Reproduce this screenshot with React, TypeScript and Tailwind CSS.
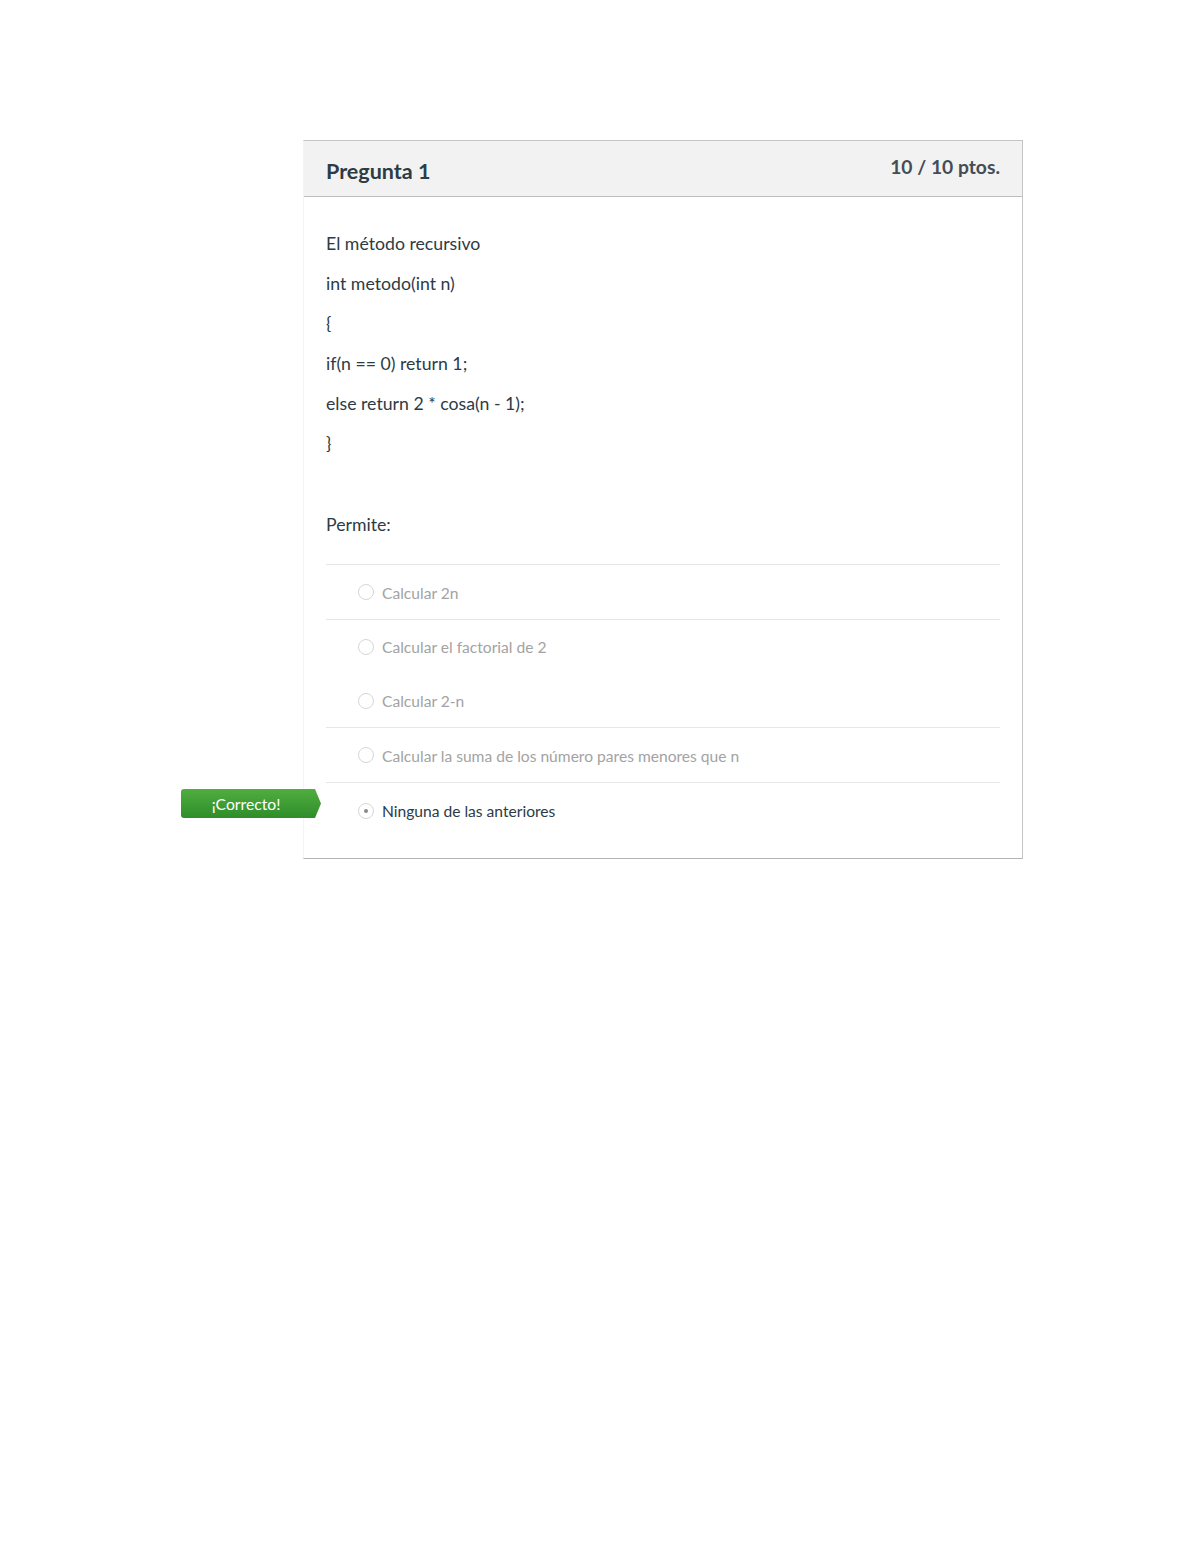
import React from "react";

const options = [
  { text: "Calcular 2n", line: true, h: "h-[55px]" },
  { text: "Calcular el factorial de 2", line: false, h: "h-[54px]" },
  { text: "Calcular 2-n", line: true, h: "h-[54px]" },
  { text: "Calcular la suma de los número pares menores que n", line: true, h: "h-[55px]" },
];

function Radio({ checked }: { checked?: boolean }) {
  return (
    <span className="flex h-[16px] w-[16px] items-center justify-center rounded-full border border-[#d6d6d6] bg-white">
      {checked && <span className="h-[4px] w-[4px] rounded-full bg-[#8a8a8a]" />}
    </span>
  );
}

export default function App() {
  return (
    <div className="min-h-[1553px] w-[1200px] bg-white" style={{ fontFamily: "Lato, 'Open Sans', sans-serif" }}>
      <div className="pl-[303px] pt-[140px]">
        <div className="w-[720px] border-t border-r border-b border-l border-t-[#c4c4c4] border-r-[#c4c4c4] border-b-[#b4b4b4] border-l-[#f4f4f4]">
          <div className="flex h-[56px] justify-between border-b border-[#bdbdbd] bg-[#f2f2f2] px-[22px]">
            <div className="pt-[17px] text-[21.5px] font-bold leading-[26px] text-[#2d3b45]">Pregunta 1</div>
            <div className="pt-[14px] text-[19.3px] font-bold leading-[24px] text-[#454d54]">10 / 10 ptos.</div>
          </div>
          <div className="px-[22px] pt-[34px] pb-[20px] text-[17.7px] leading-[26px] text-[#2d3b45]">
            <p className="mb-[14px]">El método recursivo</p>
            <p className="mb-[14px]">int metodo(int n)</p>
            <p className="mb-[14px]">{"{"}</p>
            <p className="mb-[14px]">if(n == 0) return 1;</p>
            <p className="mb-[14px]">else return 2 * cosa(n - 1);</p>
            <p className="mb-[14px]">{"}"}</p>
            <p className="mb-[15px] h-[26px]"></p>
            <p className="mb-[26px]">Permite:</p>
            <div className="border-t border-[#e6e6e6]">
              {options.map((o, i) => (
                <div
                  key={i}
                  className={`flex ${o.h} items-center gap-[8px] pl-[32px] text-[15.6px] text-[#a3a3a3] ${o.line ? "border-b border-[#e6e6e6]" : "border-b border-transparent"}`}
                >
                  <Radio />
                  <span className="pt-[1px]">{o.text}</span>
                </div>
              ))}
              <div className="relative flex h-[55px] items-center gap-[8px] pl-[32px] text-[15.6px] text-[#2d3b45]">
                <Radio checked />
                <span className="pt-[1px]">Ninguna de las anteriores</span>
                <div className="absolute left-[-145px] top-[6px] flex h-[29px] items-center">
                  <div className="flex h-[29px] w-[130px] items-center justify-center rounded-l-[3px] bg-gradient-to-b from-[#4fae3f] to-[#2f8d2a] text-[15.7px] text-white">
                    ¡Correcto!
                  </div>
                  <svg width="10" height="29" viewBox="0 0 10 29" className="block">
                    <defs>
                      <linearGradient id="g" x1="0" y1="0" x2="0" y2="1">
                        <stop offset="0" stopColor="#4fae3f" />
                        <stop offset="1" stopColor="#2f8d2a" />
                      </linearGradient>
                    </defs>
                    <polygon points="0,0 4,0 10,14.5 4,29 0,29" fill="url(#g)" />
                  </svg>
                </div>
              </div>
            </div>
          </div>
        </div>
      </div>
    </div>
  );
}
